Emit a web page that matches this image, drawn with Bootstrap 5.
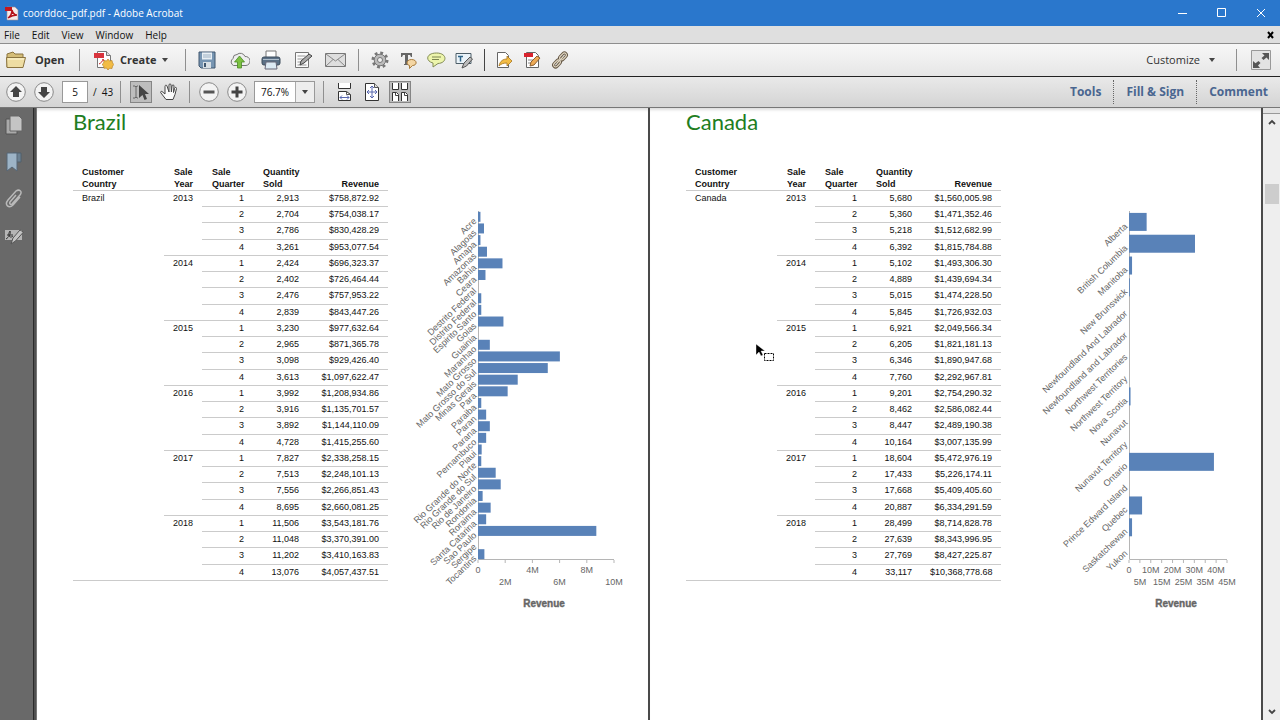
<!DOCTYPE html>
<html lang="en">
<head>
<meta charset="utf-8">
<meta name="viewport" content="width=device-width, initial-scale=1">
<title>coorddoc_pdf.pdf - Adobe Acrobat</title>
<link href="https://cdn.jsdelivr.net/npm/bootstrap@5.3.0/dist/css/bootstrap.min.css" rel="stylesheet">
<style>
body{font-family:"Open Sans","Noto Sans",sans-serif;font-size:10px;line-height:16px;color:#111;background:#fff}
button,input,select{font:inherit;color:inherit}
svg{display:block;flex:none}
.titlebar{height:26px;background:#2a77cc;color:#fff;padding-left:5px}
.winbtn{width:39px;height:26px;border:0;background:none;color:#fff;padding:0;display:grid;place-items:center}
.menubar{height:18px;background:#dfdfdf;border-bottom:1px solid #8e8e8e;padding-left:4px;color:#111}
.menubar .menu-link{color:inherit;text-decoration:none;line-height:16px}
.bar-a{height:32px;background:linear-gradient(#f7f7f7,#e6e6e6)}
.bar-b{height:32px;background:linear-gradient(#e9e9e9,#d4d4d4);border-top:1px solid #222;border-bottom:1px solid #777}
.tool{border:0;background:none;padding:0;display:grid;place-items:center;height:24px;flex:none}
.w22{width:22px}.w28{width:28px}.w32{width:32px}
.tool.on{background:#bdbdbd;border:1px solid #858585;height:22px}
.vline{width:1px;height:22px;background:#8f8f8f;flex:none}
.vdots{width:0;height:24px;border-left:1px dotted #666;flex:none}
.strong-text{font-weight:700;font-size:11px;color:#333}
.pagebox{width:26px;height:22px;border:1px solid #999;background:#fff;text-align:center;padding:0}
.zoombox{width:61px;height:22px;border:1px solid #999;background:#fff}
.zoombox input{width:40px;border:0;padding:0;text-align:center;background:none}
.zoombox button{width:19px;height:20px;border:0;border-left:1px solid #aaa;background:#eee;padding:0;display:grid;place-items:center}
.pane-link{color:#4a6690;font-weight:700;font-size:12px;text-decoration:none}
.rail{width:33px;background:#696969;padding-top:4px;gap:12px;padding-left:1px}
.rail-edge{width:4px;background:#505050;border-left:1px solid #2b2b2b;border-right:1px solid #777}
.rail .tool{width:26px;height:25px}
.sheet{flex:1 1 0;min-width:0;background:#fff;padding-left:36px;box-shadow:inset 0 4px 3px -2px #ddd}
.split{width:2px;background:#4a4a4a;flex:none}
.sheet h2{font:400 22px/28px Lato,sans-serif;color:#217d21;margin:0 0 30px}
.report{font:9px/13px "Liberation Sans",Arial,sans-serif;color:#111;width:315px;border-collapse:separate;border-spacing:0;table-layout:fixed;flex:none}
.report th,.report td{padding:0 9px;vertical-align:top;border-bottom:1px solid #cbcbcb;white-space:nowrap}
.report thead th{height:25px;line-height:12px;vertical-align:bottom;padding-right:0;padding-left:10px}
.report thead th:first-child{padding-left:9px}
.report thead tr th:last-child{text-align:right;padding-right:9px}
.report thead span{display:block}
.report tbody td,.report tbody th{height:16px;line-height:15px;text-align:right;font-weight:400}
.report tbody tr:nth-child(4n+3) td{height:17px}
.report tbody .group-name{text-align:left}
.chart{width:245px;height:430px;margin-top:34px;overflow:visible;font:9px "Liberation Sans",Arial,sans-serif;fill:#666}
.chart .bar{fill:#5982b8}
.chart .axis{stroke:#b5b5b5;fill:none}
.chart .caption-text{font-size:10px;font-weight:700;stroke:#666;stroke-width:.4px}
.scroller{width:17px;background:#eee;flex:none}
.scroller .grip{height:6px;border-bottom:1px solid #999;background:#e3e3e3}
.scroller .thumb{height:20px;background:#cdcdcd;margin:0 1px 0 2px}
.scroller button{border:0;background:none;padding:0;height:16px;width:17px;display:grid;place-items:center}
.pointer{position:absolute;left:105px;top:235px}
</style>
</head>
<body>
<div class="vh-100 d-flex flex-column overflow-hidden">
<header class="titlebar d-flex align-items-center flex-shrink-0">
  <svg width="14" height="15" viewBox="0 0 14 15"><path d="M2 1h8l3 3v10H2z" fill="#f4e9e9" stroke="#a89090" stroke-width=".6"/><path d="M0 1h7v4H0z" fill="#c4161c"/><path d="M3 12c3-2 4-5 4-8 1 4 3 5 5 5-3 0-6 1-9 3z" fill="none" stroke="#b5121b" stroke-width="1.5"/></svg>
  <span class="ms-1 me-auto">coorddoc_pdf.pdf - Adobe Acrobat</span>
  <button class="winbtn" aria-label="Minimize"><svg width="10" height="10"><path d="M0 5.5h9" stroke="#fff"/></svg></button>
  <button class="winbtn" aria-label="Maximize"><svg width="10" height="10"><path d="M.5.5h8v8h-8z" fill="none" stroke="#fff"/></svg></button>
  <button class="winbtn" aria-label="Close"><svg width="10" height="10"><path d="M1 1l8 8M9 1l-8 8" stroke="#fff"/></svg></button>
</header>
<nav class="menubar d-flex align-items-center flex-shrink-0" aria-label="Menu">
  <div class="d-flex me-auto" style="gap:12px">
    <a class="menu-link" href="#">File</a><a class="menu-link" href="#">Edit</a><a class="menu-link" href="#">View</a><a class="menu-link" href="#">Window</a><a class="menu-link" href="#">Help</a>
  </div>
  <button class="tool me-1" aria-label="Close document" style="height:14px"><svg width="10" height="8"><path d="M2 1l5 6M7 1l-5 6" stroke="#000" stroke-width="2"/></svg></button>
</nav>
<div class="bar-a d-flex align-items-center flex-shrink-0">
  <button class="tool d-flex align-items-center strong-text" style="padding-left:5px;gap:8px;width:75px">
    <svg width="22" height="18" viewBox="0 0 22 18"><path d="M2 16V3l6-2 2 2h8v4" fill="#d4bd78" stroke="#8b7440"/><path d="M1.500 6.500h19L18 16.500H2z" fill="#eedda3" stroke="#8b7440"/><path d="M3 8h16" stroke="#fff8d8"/></svg>Open</button>
  <span class="vline" style="margin-left:4px"></span>
  <button class="tool d-flex align-items-center strong-text" style="margin-left:14px;gap:6px;width:91px">
    <svg width="20" height="20" viewBox="0 0 20 20"><path d="M3.500 1.500h9l4 4v12h-13z" fill="#fff" stroke="#777"/><path d="M12.500 1.500v4h4" fill="#ddd" stroke="#777"/><path d="M0 3h10v5H0z" fill="#d8343d"/><path d="M5 14c2-1 4-3 4-5 0 2 2 3 4 3" fill="none" stroke="#c22"/><path d="M14 9l1.500 2 2.500-.5.500 2.500 1.500 1.500-1.500 1.500-.5 2.500-2.500-.3L14 20l-1.500-2-2.500.3-.3-2.300L8 14.500 9.700 13l.3-2.500 2.500.5z" fill="#f2bc45" stroke="#b8822a" stroke-width=".7"/></svg>
    <span>Create</span><svg width="6" height="4"><path d="M0 0h6L3 4z" fill="#444"/></svg></button>
  <span class="vline" style="margin-right:5px"></span>
  <button class="tool w32" aria-label="Save"><svg width="18" height="18" viewBox="0 0 18 18"><path d="M1 1h16v16H3l-2-2z" fill="#7795b2" stroke="#40566e"/><path d="M4 1.500h10v7H4z" fill="#e8eff4"/><path d="M5 11h8v6H5z" fill="#d8dfe4"/><path d="M6 12h2v4H6z" fill="#3f566e"/><path d="M5 4h8M5 6h8" stroke="#9db1c4"/></svg></button>
  <button class="tool w32" aria-label="Upload"><svg width="21" height="18" viewBox="0 0 21 18"><path d="M4.500 14.500a4 4 0 0 1-.5-7 4 4 0 0 1 4-4 5 5 0 0 1 8 2 4.500 4.500 0 0 1 1 9z" fill="#eee" stroke="#777"/><path d="M10.500 5l5 6h-3v6h-4v-6h-3z" fill="#7cc142" stroke="#4a8a25" stroke-width=".8"/></svg></button>
  <button class="tool w32" aria-label="Print"><svg width="20" height="20" viewBox="0 0 20 20"><path d="M5 8V1h10v7" fill="#fff" stroke="#777"/><rect x="1" y="7" width="18" height="8" rx="2" fill="#5b7086" stroke="#3c4c5c"/><path d="M2 9.500h16" stroke="#aebdca"/><path d="M5 12h10l1 7H4z" fill="#dceaf4" stroke="#667"/></svg></button>
  <button class="tool w32" aria-label="Edit"><svg width="20" height="20" viewBox="0 0 20 20"><path d="M2.500 2.500h13v15h-13z" fill="#fbfbfb" stroke="#777"/><path d="M4.500 6h8M4.500 9h6M4.500 12h4M4.500 15h9" stroke="#999"/><path d="M7 15l1-4 8-7 3 2-8 7z" fill="#aaa" stroke="#444"/></svg></button>
  <button class="tool w32" aria-label="Email"><svg width="21" height="14" viewBox="0 0 21 14"><path d="M.5.5h20v13H.5z" fill="#dedede" stroke="#777"/><path d="M1 1l9.500 7L20 1M1 13l7-6.500M20 13l-7-6.500" fill="none" stroke="#888"/></svg></button>
  <span class="vline" style="margin-left:7px;margin-right:7px"></span>
  <button class="tool w28" aria-label="Settings"><svg width="18" height="18" viewBox="-9 -9 18 18"><circle r="7" fill="none" stroke="#777" stroke-width="3" stroke-dasharray="2.750 2.750"/><circle r="5.800" fill="#bbb" stroke="#777"/><circle r="2.500" fill="#f0f0f0" stroke="#777"/></svg></button>
  <button class="tool w28" aria-label="Text comment"><svg width="17" height="17" viewBox="0 0 17 17"><path d="M1 1h11v4h-1l-1-2H8v9h2v1H4v-1h1V3H3L2 5H1z" fill="#666"/><path d="M11.500 7.500c6 0 6 6 1 6l-3 3v-3c-4-1-3-6 2-6z" fill="#f4d6a4" stroke="#a87b3c"/></svg></button>
  <button class="tool w28" aria-label="Comment"><svg width="19" height="16" viewBox="0 0 19 16"><path d="M9.500 1c11 0 11 10 1.500 10.500L6 15v-4C-2 9-1 1 9.500 1z" fill="#edf5ac" stroke="#838c55"/><path d="M5 5h9M5 7.500h7" stroke="#7d8551"/></svg></button>
  <button class="tool w28" aria-label="Sign text"><svg width="18" height="17" viewBox="0 0 18 17"><path d="M1 1.500h15v10H1z" fill="#eaf3f9" stroke="#4d5e68"/><path d="M3 4.500h5M5.500 4.500v5" stroke="#2f6488" stroke-width="1.500"/><path d="M7 16l2-5 6-6 2.500 2-6 7z" fill="#bbb" stroke="#555"/></svg></button>
  <span class="vline" style="margin-left:6px;margin-right:5px;background:#444"></span>
  <button class="tool w28" aria-label="Share"><svg width="18" height="18" viewBox="0 0 18 18"><path d="M2.500 1.500h8l3 3v12h-11z" fill="#fff" stroke="#666"/><path d="M4 15c1-5 4-7 8-7V5l5 5-5 5v-3c-4 0-6 1-8 3z" fill="#f4bd45" stroke="#a77520" stroke-width=".8"/></svg></button>
  <button class="tool w28" aria-label="Edit PDF"><svg width="18" height="18" viewBox="0 0 18 18"><path d="M3.500 1.500h9l3 3v12h-12z" fill="#fff" stroke="#666"/><path d="M1 2h9v4H1z" fill="#d9232e"/><path d="M5 9h6M5 12h4" stroke="#888"/><path d="M7 15l1-4 6-6 3 2-6 7z" fill="#edaa55" stroke="#8e6032"/></svg></button>
  <button class="tool w28" aria-label="Link"><svg width="18" height="18" viewBox="0 0 18 18" fill="none"><g stroke="#665947" stroke-width="3"><rect x="8" y="3.500" width="8" height="4" rx="2" transform="rotate(-45 12 5.500)"/><rect x="2" y="10.500" width="8" height="4" rx="2" transform="rotate(-45 6 12.500)"/><path d="M6 12l6-6"/></g><g stroke="#e2d8c4" stroke-width="1.200"><rect x="8" y="3.500" width="8" height="4" rx="2" transform="rotate(-45 12 5.500)"/><rect x="2" y="10.500" width="8" height="4" rx="2" transform="rotate(-45 6 12.500)"/><path d="M6 12l6-6"/></g></svg></button>
  <button class="tool d-flex align-items-center ms-auto" style="gap:9px;color:#333;font-size:11px">Customize<svg width="6" height="4"><path d="M0 0h6L3 4z" fill="#444"/></svg></button>
  <span class="vline" style="margin-left:21px;margin-right:14px"></span>
  <button class="tool" aria-label="Full screen" style="margin-right:9px"><svg width="20" height="20" viewBox="0 0 20 20"><path d="M.5.5h19v19H.5z" fill="#e3e3e3" stroke="#999"/><path d="M11 3h7v7l-2.500-2.500-3 2.500-2-2 3-2.500zM2 11l2.500 2.200L7.500 11l2 2-2.500 2.500L9 18H2z" fill="#555"/></svg></button>
</div>
<div class="bar-b d-flex align-items-center flex-shrink-0">
  <button class="tool w28" style="margin-left:2px" aria-label="Previous page"><svg width="20" height="20" viewBox="0 0 20 20"><circle cx="10" cy="10" r="9.300" fill="#f3f3f3" stroke="#888"/><path d="M10 4l6 6h-3v5H7v-5H4z" fill="#444"/></svg></button>
  <button class="tool w28" aria-label="Next page"><svg width="20" height="20" viewBox="0 0 20 20"><circle cx="10" cy="10" r="9.300" fill="#f3f3f3" stroke="#888"/><path d="M10 16l6-6h-3V5H7v5H4z" fill="#444"/></svg></button>
  <input class="pagebox" style="margin-left:4px" value="5" aria-label="Page number">
  <span style="margin-left:5px;width:26px;white-space:pre">/  43</span>
  <span class="vline" style="margin-left:1px;margin-right:9px"></span>
  <button class="tool on w22" aria-label="Select"><svg width="18" height="18" viewBox="0 0 18 18"><path d="M1 3h2l1 1 1-1h1M4 4v10M1 15h2l1-1 1 1h1" fill="none" stroke="#666"/><path d="M7 2v13l3.500-3 2 5 2.500-1-2-5h4z" fill="#444"/></svg></button>
  <button class="tool w32" style="margin-left:1px" aria-label="Hand"><svg width="18" height="18" viewBox="0 0 18 18"><path d="M5 11L2 8.500c-1-.5-2 .5-1 1.500l5 6.500h7l2-5 1.500-6c0-1.500-1.500-1.500-2 0l-1 4 .5-6.500c0-1.500-1.800-1.500-2 0l-.6 6L11 2c0-1.500-2-1.500-2 0v7L7 3c-.5-1.500-2.200-.8-2 .5z" fill="#fafafa" stroke="#444"/></svg></button>
  <span class="vline" style="margin-left:4px;margin-right:5px"></span>
  <button class="tool w28" aria-label="Zoom out"><svg width="20" height="20" viewBox="0 0 20 20"><circle cx="10" cy="10" r="9.300" fill="#f3f3f3" stroke="#888"/><path d="M4.500 8.500h11v3h-11z" fill="#555"/></svg></button>
  <button class="tool w28" aria-label="Zoom in"><svg width="20" height="20" viewBox="0 0 20 20"><circle cx="10" cy="10" r="9.300" fill="#f3f3f3" stroke="#888"/><path d="M4.500 8.500h4v-4h3v4h4v3h-4v4h-3v-4h-4z" fill="#444"/></svg></button>
  <div class="zoombox d-flex align-items-center" style="margin-left:3px"><input value="76.7%" aria-label="Zoom"><button aria-label="Zoom levels"><svg width="6" height="4"><path d="M0 0h6L3 4z" fill="#444"/></svg></button></div>
  <span class="vline" style="margin-left:8px;margin-right:6px"></span>
  <button class="tool w28" aria-label="Fit width"><svg width="15" height="18" viewBox="0 0 15 18"><path d="M1.500 0v5.500h12V0M1.500 17.500v-9h8l4 3v6z" fill="#fff" stroke="#333"/><path d="M9.500 8.500v3h4" fill="none" stroke="#555"/><path d="M3 14.500h9M5 12.500l-2 2 2 2M10 12.500l2 2-2 2" fill="none" stroke="#5968b0"/></svg></button>
  <button class="tool w28" aria-label="Fit page"><svg width="16" height="18" viewBox="0 0 16 18"><path d="M1.500.5h9l4 4v13h-13z" fill="#fff" stroke="#333"/><path d="M10.500.5v4h4" fill="#ddd" stroke="#555"/><path d="M8 3v12M3 9h10M6 5l2-2 2 2M6 13l2 2 2-2M5 7L3 9l2 2M11 7l2 2-2 2" fill="none" stroke="#5968b0"/></svg></button>
  <button class="tool on w22" style="margin-left:3px" aria-label="Two pages"><svg width="18" height="18" viewBox="0 0 18 18"><path d="M1.500 0v6.500h6V0M10.500 0v6.500h6V0M1.500 18V9.500h4l2 2V18M10.500 18V9.500h4l2 2V18" fill="#fff" stroke="#333"/><path d="M4.500 9.500v3h3M13.500 9.500v3h3" fill="none" stroke="#444"/></svg></button>
  <nav class="d-flex align-items-center ms-auto" aria-label="Panes" style="gap:12px;margin-right:12px"><a class="pane-link" href="#">Tools</a><span class="vdots"></span><a class="pane-link" href="#">Fill &amp; Sign</a><span class="vdots"></span><a class="pane-link" href="#">Comment</a></nav>
</div>
<main class="d-flex flex-grow-1 overflow-hidden">
  <aside class="rail d-flex flex-column flex-shrink-0">
    <button class="tool" aria-label="Page thumbnails"><svg width="18" height="20" viewBox="0 0 18 20"><path d="M1 4h11v15H1z" fill="#a9a9a9" stroke="#555"/><path d="M5 1h9l3 3v12H5z" fill="#c4c4c4" stroke="#666"/></svg></button>
    <button class="tool" aria-label="Bookmarks"><svg width="16" height="20" viewBox="0 0 16 20"><path d="M7 1h8v9H7z" fill="#6c8294" stroke="#50606c"/><path d="M1 1h10v18l-5-4-5 4z" fill="#9db4c7" stroke="#566777"/></svg></button>
    <button class="tool" aria-label="Attachments"><svg width="18" height="20" viewBox="0 0 18 20"><path d="M11 6l-6 7c-1 2 1 3 2 2l8-9c3-4-1-6-4-4l-8 9c-4 5 1 9 5 5l7-8" fill="none" stroke="#b9b9b9" stroke-width="1.500"/></svg></button>
    <button class="tool" aria-label="Signatures"><svg width="20" height="18" viewBox="0 0 20 18"><path d="M1 3h17v10H1z" fill="#b5b5b5"/><path d="M2 12c3-2 5-5 4-8-3 4 0 8 3 5M3 8h6" fill="none" stroke="#333"/><path d="M7 17l2-6 7-8 3.500 2-8 9z" fill="#c4c4c4" stroke="#555"/></svg></button>
  </aside>
  <div class="rail-edge flex-shrink-0"></div>
  <section class="sheet"><h2>Brazil</h2><div class="d-flex align-items-start" data-country="Brazil"></div></section>
  <div class="split"></div>
  <section class="sheet position-relative"><h2>Canada</h2><div class="d-flex align-items-start" data-country="Canada"></div>
    <svg class="pointer" width="20" height="20" viewBox="0 0 20 20"><path d="M1 1v11l3-3 2 4 2-1-2-4h4z" fill="#000" stroke="#fff" stroke-width=".4"/><rect x="9.500" y="10.500" width="9" height="7" fill="#fff" stroke="#000" stroke-dasharray="2 1"/></svg>
  </section>
  <div class="split"></div>
  <div class="scroller d-flex flex-column"><div class="grip"></div><button aria-label="Scroll up"><svg width="8" height="6"><path d="M1 5l3-3 3 3" fill="none" stroke="#444" stroke-width="1.800"/></svg></button><div style="height:54px"></div><div class="thumb"></div><button class="mt-auto" aria-label="Scroll down"><svg width="8" height="6"><path d="M1 1l3 3 3-3" fill="none" stroke="#444" stroke-width="1.800"/></svg></button></div>
</main>
</div>
<script>
const reports = {
  Brazil: {
    rows: `2,913 758,872.92|2,704 754,038.17|2,786 830,428.29|3,261 953,077.54|2,424 696,323.37|2,402 726,464.44|2,476 757,953.22|2,839 843,447.26|3,230 977,632.64|2,965 871,365.78|3,098 929,426.40|3,613 1,097,622.47|3,992 1,208,934.86|3,916 1,135,701.57|3,892 1,144,110.09|4,728 1,415,255.60|7,827 2,338,258.15|7,513 2,248,101.13|7,556 2,266,851.43|8,695 2,660,081.25|11,506 3,543,181.76|11,048 3,370,391.00|11,202 3,410,163.83|13,076 4,057,437.51`,
    axis: 90, span: 136, bar: 10, max: 10, step: 2,
    states: [['Acre',.18],['Alagoas',.44],['Amapa',.18],['Amazonas',.66],['Bahia',1.8],['Ceara',.55],['Destrito Federal',.01],['Distrito Federal',.24],['Espirito Santo',.24],['Goias',1.87],['Guainia',.01],['Maranhao',.87],['Mato Grosso',6.02],['Mato Grosso do Sul',5.13],['Minas Gerais',2.92],['Para',2.18],['Paraiba',.24],['Paran',.6],['Parana',.87],['Pernambuco',.6],['Piaui',.27],['Rio Grande do Norte',.24],['Rio Grande do Sul',1.3],['Rio de Janeiro',1.67],['Rondonia',.34],['Roraima',.93],['Santa Catarina',.6],['Sao Paulo',8.7],['Sergipe',.01],['Tocantins',.47]]
  },
  Canada: {
    rows: `5,680 1,560,005.98|5,360 1,471,352.46|5,218 1,512,682.99|6,392 1,815,784.88|5,102 1,493,306.30|4,889 1,439,694.34|5,015 1,474,228.50|5,845 1,726,932.03|6,921 2,049,566.34|6,205 1,821,181.13|6,346 1,890,947.68|7,760 2,292,967.81|9,201 2,754,290.32|8,462 2,586,082.44|8,447 2,489,190.38|10,164 3,007,135.99|18,604 5,472,976.19|17,433 5,226,174.11|17,668 5,409,405.60|20,887 6,334,291.59|28,499 8,714,828.78|27,639 8,343,996.95|27,769 8,427,225.87|33,117 10,368,778.68`,
    axis: 128, span: 98, bar: 18, max: 45, step: 5,
    states: [['Alberta',8.1],['British Columbia',30.3],['Manitoba',1.4],['New Brunswick',.4],['Newfoundland And Labrador',.01],['Newfoundland and Labrador',.01],['Northwest Territories',.01],['Northwest Territory',.01],['Nova Scotia',.7],['Nunavut',.01],['Nunavut Territory',.01],['Ontario',39],['Prince Edward Island',.01],['Quebec',6],['Saskatchewan',1.4],['Yukon',.01]]
  }
};

function table(name, r) {
  const body = r.rows.split('|').map((line, i) => {
    const [qty, revenue] = line.split(' ');
    return '<tr>' +
      (i === 0 ? `<th class="group-name" scope="rowgroup" rowspan="24">${name}</th>` : '') +
      (i % 4 === 0 ? `<th scope="rowgroup" rowspan="4">${2013 + i / 4}</th>` : '') +
      `<td>${i % 4 + 1}</td><td>${qty}</td><td>$${revenue}</td></tr>`;
  }).join('');
  return `<table class="report"><colgroup><col width="91"><col width="38"><col width="51"><col width="55"><col width="80"></colgroup>
    <thead><tr><th scope="col"><span>Customer</span>Country</th><th scope="col"><span>Sale</span>Year</th><th scope="col"><span>Sale</span>Quarter</th><th scope="col"><span>Quantity</span>Sold</th><th scope="col">Revenue</th></tr></thead>
    <tbody>${body}</tbody></table>`;
}

function chart(r) {
  const top = 11, height = 349, base = top + height, x0 = r.axis;
  const pitch = height / r.states.length;
  let out = '';
  r.states.forEach(([label, value], i) => {
    const c = top + pitch * (i + .5);
    const tx = x0 - 1, ty = c + 5;
    out += `<text x="${tx}" y="${ty}" text-anchor="end" transform="rotate(-44 ${tx} ${ty})">${label}</text>`;
  });
  out += `<path class="axis" d="M${x0 + .5} ${top}V${base - .5}H${x0 + r.span}"/>`;
  r.states.forEach(([label, value], i) => {
    const c = top + pitch * (i + .5);
    if (value > .1) out += `<rect class="bar" x="${x0}" y="${c - r.bar / 2}" width="${value / r.max * r.span}" height="${r.bar}"/>`;
  });
  for (let v = 0, n = 0; v <= r.max; v += r.step, n++) {
    const x = x0 + v / r.max * r.span;
    out += `<path class="axis" d="M${x} ${base}v3"/><text x="${x}" y="${n % 2 ? base + 25 : base + 13}" text-anchor="middle">${v ? v + 'M' : 0}</text>`;
  }
  out += `<text class="caption-text" x="${x0 + r.span / 2 - 2}" y="${base + 47}" text-anchor="middle">Revenue</text>`;
  return `<svg class="chart" role="img" aria-label="Revenue by state">${out}</svg>`;
}

document.querySelectorAll('[data-country]').forEach(el => {
  const r = reports[el.dataset.country];
  el.innerHTML = table(el.dataset.country, r) + chart(r);
});
</script>
<script src="https://cdn.jsdelivr.net/npm/bootstrap@5.3.0/dist/js/bootstrap.bundle.min.js"></script>
</body>
</html>
